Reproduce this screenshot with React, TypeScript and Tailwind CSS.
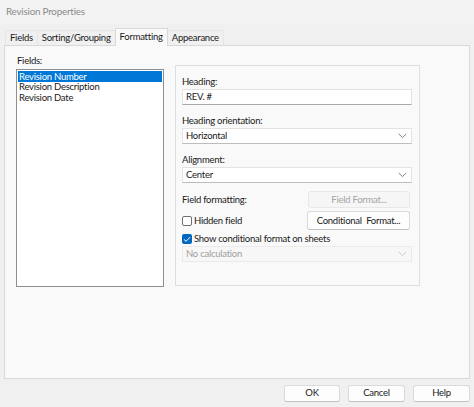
import React from "react";

const Chevron = ({ color = "#6b6b6b" }: { color?: string }) => (
  <svg width="9" height="6" viewBox="0 0 9 6" fill="none">
    <path d="M1 1.2 L4.5 4.6 L8 1.2" stroke={color} strokeWidth="0.9" strokeLinecap="round" strokeLinejoin="round" />
  </svg>
);

const Select = ({ value, disabled }: { value: string; disabled?: boolean }) => (
  <div
    className={
      "flex h-[16px] w-[230px] items-center justify-between pl-[3px] pr-[4px] " +
      (disabled
        ? "border border-[#ebebeb] bg-[#f7f7f7] text-[#9e9e9e]"
        : "border border-[#e3e3e3] border-b-[#bdbdbd] bg-white text-[#1a1a1a]")
    }
  >
    <span>{value}</span>
    <Chevron color={disabled ? "#c4c4c4" : "#707070"} />
  </div>
);

const Button = ({ label, w, disabled }: { label: string; w: string; disabled?: boolean }) => (
  <div
    className={
      "flex items-center justify-center whitespace-pre rounded-[3px] border " +
      w +
      (disabled
        ? " border-[#e8e8e8] bg-[#f6f6f6] text-[#a3a3a3]"
        : " border-[#dadada] border-b-[#c2c2c2] bg-[#fdfdfd] text-[#1a1a1a]")
    }
  >
    {label}
  </div>
);

export default function App() {
  return (
    <div
      className="flex h-[407px] w-[474px] flex-col bg-[#f0f0f0] text-[9.5px] leading-none tracking-[-0.25px] text-[#1a1a1a]"
      style={{ fontFamily: 'Lato, sans-serif' }}
    >
      {/* Title bar */}
      <div className="flex h-[24px] items-center bg-[#f3f3f3] pl-[6px] text-[9.8px] tracking-[-0.2px] text-[#8a8a8a]">
        Revision Properties
      </div>

      {/* Tabs */}
      <div className="flex h-[21px] items-end pl-[5px]">
        <div className="flex h-[15px] items-center border-t border-l border-[#e6e6e6] px-[4px]">Fields</div>
        <div className="flex h-[15px] items-center border-t border-l border-[#e6e6e6] px-[4px]">Sorting/Grouping</div>
        <div className="relative z-10 -mb-px flex h-[18px] items-center border-x border-t border-[#d9d9d9] bg-[#f9f9f9] px-[4px] pb-[2px]">
          Formatting
        </div>
        <div className="flex h-[15px] items-center border-t border-r border-[#e6e6e6] px-[4px]">Appearance</div>
      </div>

      {/* Tab panel */}
      <div className="mx-[4px] flex h-[334px] border border-[#d9d9d9] bg-[#f9f9f9] pt-[10px] pl-[11px]">
        {/* Fields list */}
        <div className="flex flex-col">
          <div className="h-[13px] pl-[1px]">Fields:</div>
          <div className="flex h-[218px] w-[148px] flex-col border border-[#8f8f8f] bg-white p-px">
            <div className="flex h-[10.5px] items-center bg-[#0078d7] pl-[1px] text-white">Revision Number</div>
            <div className="flex h-[10.5px] items-center pl-[1px]">Revision Description</div>
            <div className="flex h-[10.5px] items-center pl-[1px]">Revision Date</div>
          </div>
        </div>

        {/* Group box */}
        <div className="ml-[11px] mt-[9px] flex h-[221px] w-[245px] flex-col border border-[#dedede] pl-[6px] pt-[11px]">
          <div className="h-[12px]">Heading:</div>
          <div className="flex h-[16px] w-[230px] items-center border border-[#e3e3e3] border-b-[#a8a8a8] bg-white pl-[3px]">
            REV. #
          </div>

          <div className="mt-[11px] h-[12px]">Heading orientation:</div>
          <Select value="Horizontal" />

          <div className="mt-[11px] h-[12px]">Alignment:</div>
          <Select value="Center" />

          <div className="mt-[8px] flex h-[17px] items-center justify-between pr-[9px]">
            <span>Field formatting:</span>
            <Button label="Field Format..." w="w-[102px] h-[17px]" disabled />
          </div>

          <div className="mt-[3px] flex h-[19px] items-center justify-between pr-[9px]">
            <div className="flex items-center gap-[2px]">
              <div className="h-[10px] w-[10px] rounded-[2px] border border-[#6f6f6f] bg-white" />
              <span>Hidden field</span>
            </div>
            <Button label="Conditional  Format..." w="w-[103px] h-[19px]" />
          </div>

          <div className="mt-[3px] flex h-[12px] items-center gap-[2px]">
            <div className="flex h-[10px] w-[10px] items-center justify-center rounded-[2px] bg-[#0067c0]">
              <svg width="8" height="7" viewBox="0 0 8 7" fill="none">
                <path d="M1.2 3.6 L3.1 5.4 L6.8 1.4" stroke="white" strokeWidth="1" strokeLinecap="round" strokeLinejoin="round" />
              </svg>
            </div>
            <span>Show conditional format on sheets</span>
          </div>

          <div className="mt-[1px]">
            <Select value="No calculation" disabled />
          </div>
        </div>
      </div>

      {/* Buttons */}
      <div className="flex flex-1 items-center justify-end gap-[8px] pr-[4px]">
        <Button label="OK" w="w-[56px] h-[17px]" />
        <Button label="Cancel" w="w-[57px] h-[17px]" />
        <Button label="Help" w="w-[57px] h-[17px]" />
      </div>
    </div>
  );
}
